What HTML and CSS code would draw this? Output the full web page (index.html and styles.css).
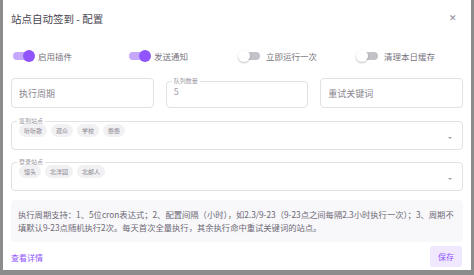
FILE: index.html
```html
<!DOCTYPE html>
<html lang="zh-CN">
<head>
    <meta charset="UTF-8">
    <meta name="viewport" content="width=device-width, initial-scale=1.0">
    <title>站点自动签到 - 配置</title>
    <link rel="stylesheet" href="styles.css">
</head>
<body>

    <!-- 配置弹窗 -->
    <div class="dialog">
        <div class="dialog-header">
            <h2>站点自动签到 - 配置</h2>
            <span class="close-btn">&#x2715;</span>
        </div>

        <!-- 开关 -->
        <div class="switch-row">
            <label class="switch on"><span class="track"><span class="thumb"></span></span>启用插件</label>
            <label class="switch on"><span class="track"><span class="thumb"></span></span>发送通知</label>
            <label class="switch"><span class="track"><span class="thumb"></span></span>立即运行一次</label>
            <label class="switch"><span class="track"><span class="thumb"></span></span>清理本日缓存</label>
        </div>

        <!-- 输入框 -->
        <div class="field-row">
            <fieldset class="field"><span class="placeholder">执行周期</span></fieldset>
            <fieldset class="field"><legend>队列数量</legend><span class="value">5</span></fieldset>
            <fieldset class="field"><span class="placeholder">重试关键词</span></fieldset>
        </div>

        <fieldset class="field select">
            <legend>签到站点</legend>
            <div class="chips">
                <span class="chip">听听歌</span>
                <span class="chip">观众</span>
                <span class="chip">学校</span>
                <span class="chip">憨憨</span>
            </div>
            <span class="caret"></span>
        </fieldset>

        <fieldset class="field select">
            <legend>登录站点</legend>
            <div class="chips">
                <span class="chip">馒头</span>
                <span class="chip">北洋园</span>
                <span class="chip">北邮人</span>
            </div>
            <span class="caret"></span>
        </fieldset>

        <div class="alert">
            执行周期支持：1、5位cron表达式；2、配置间隔（小时），如2.3/9-23（9-23点之间每隔2.3小时执行一次）；3、周期不填默认9-23点随机执行2次。每天首次全量执行，其余执行命中重试关键词的站点。
        </div>

        <div class="dialog-footer">
            <a href="#" class="link">查看详情</a>
            <button class="save-btn">保存</button>
        </div>
    </div>

</body>
</html>
```

FILE: styles.css
```css
body {
    font-family: "Noto Sans CJK SC", "Noto Sans", sans-serif;
    margin: 0;
    padding: 0;
    background-color: #8c8c8c;
    height: 275px;
    overflow: hidden;
}

/* 弹窗 */
.dialog {
    background-color: #ffffff;
    margin: 0 3px 0 3px;
    height: 270px;
    padding: 0 8px;
    box-sizing: border-box;
    display: flex;
    flex-direction: column;
}

.dialog-header {
    display: flex;
    align-items: center;
    justify-content: space-between;
    height: 36px;
}

.dialog-header h2 {
    margin: 0;
    font-size: 10.5px;
    font-weight: 400;
    color: #4a4651;
}

.close-btn {
    font-size: 8.5px;
    color: #8a8690;
    margin-right: 6px;
    margin-top: -3px;
}

/* 开关 */
.switch-row {
    display: grid;
    grid-template-columns: 116px 112px 118px 1fr;
    margin-top: 2px;
    height: 36px;
    align-items: center;
}

.switch {
    display: flex;
    align-items: center;
    font-size: 8.5px;
    color: #77737d;
}

.track {
    position: relative;
    width: 19px;
    height: 8px;
    border-radius: 4px;
    background-color: #c4c2c8;
    margin: 0 6px 0 2px;
}

.thumb {
    position: absolute;
    top: -2px;
    left: -3px;
    width: 12px;
    height: 12px;
    border-radius: 50%;
    background-color: #ffffff;
    box-shadow: 0 1px 2px rgba(0, 0, 0, 0.25);
}

.switch.on .track {
    background-color: #c5a7fb;
}

.switch.on .thumb {
    left: auto;
    right: -3px;
    background-color: #9155fd;
    box-shadow: none;
}

/* 输入框 */
.field-row {
    display: grid;
    grid-template-columns: 1fr 1fr 1fr;
    gap: 12px;
    margin-top: 4px;
    margin-bottom: 10px;
}

.field {
    margin: 0;
    border: 1px solid #e2e1e4;
    border-radius: 4px;
    padding: 0 7px;
    height: 30px;
    box-sizing: border-box;
    display: flex;
    align-items: center;
    font-size: 9px;
    min-width: 0;
}

.field legend {
    font-size: 6px;
    color: #9a97a0;
    padding: 0 2px;
    margin-left: -2px;
    line-height: 1;
}

.field-row .field legend {
    margin-bottom: -4px;
}

.placeholder {
    color: #8a8690;
}

.value {
    color: #a19ea6;
    margin-top: -4px;
}

.select {
    position: relative;
    height: 32px;
    margin-bottom: 9px;
    padding-bottom: 1px;
}

.chips {
    display: flex;
    gap: 4px;
}

.chip {
    font-size: 6px;
    color: #8a8690;
    background-color: #f1f0f3;
    border-radius: 8px;
    padding: 2px 5px;
}

.caret {
    position: absolute;
    right: 10px;
    top: 13px;
    border-left: 2px solid transparent;
    border-right: 2px solid transparent;
    border-top: 2px solid #a19ea6;
}

/* 提示 */
.alert {
    background-color: #f8f8fa;
    border-radius: 4px;
    padding: 6px 3px 6px 7px;
    font-size: 8.3px;
    line-height: 13px;
    color: #6d6875;
    height: 42px;
    box-sizing: border-box;
    display: flex;
    align-items: center;
}

.dialog-footer {
    display: flex;
    align-items: center;
    justify-content: space-between;
    flex: 1;
    padding-top: 3px;
    padding-bottom: 2px;
}

.link {
    color: #9155fd;
    font-size: 8px;
    text-decoration: none;
    margin-top: 2px;
}

.save-btn {
    background-color: #f0e8fe;
    color: #9155fd;
    border: none;
    border-radius: 3px;
    font-family: inherit;
    font-size: 8px;
    padding: 5px 8px;
    margin-right: 1px;
}
```
